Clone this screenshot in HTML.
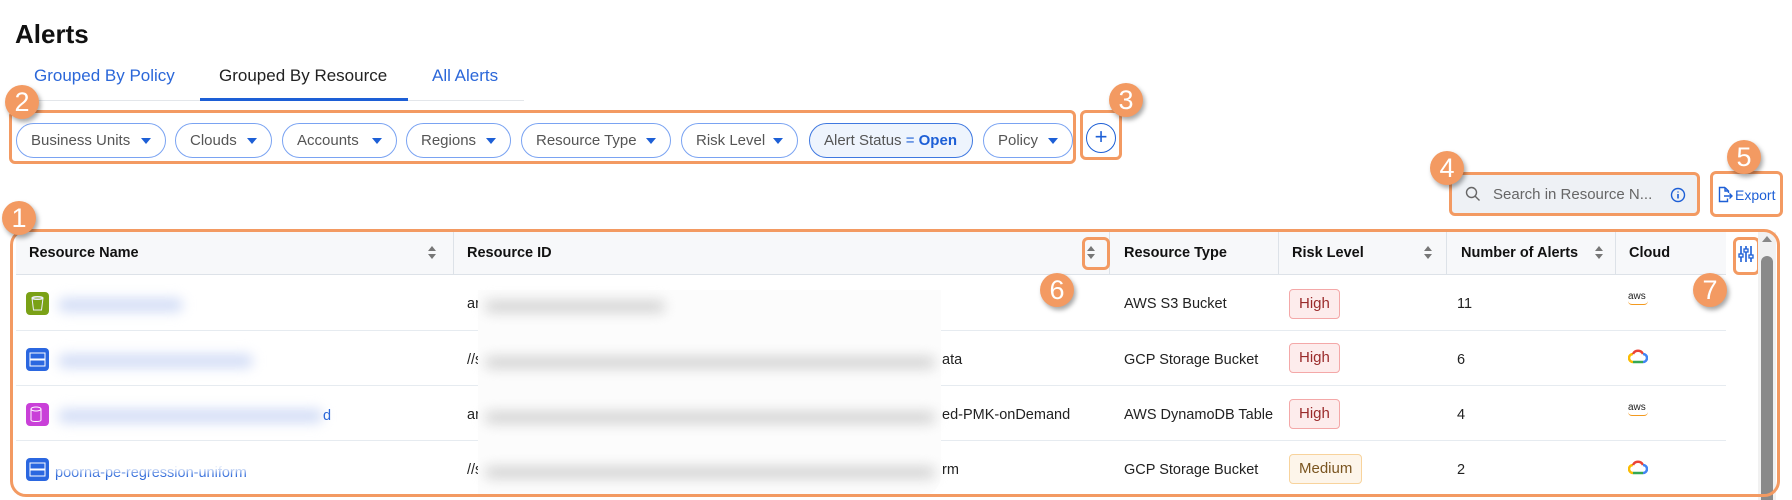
<!DOCTYPE html>
<html><head><meta charset="utf-8"><style>
*{box-sizing:border-box;margin:0;padding:0}
body{width:1792px;height:500px;background:#fff;font-family:"Liberation Sans",sans-serif;position:relative;overflow:hidden;color:#222}
.a{position:absolute}
.chip{position:absolute;top:123px;height:35px;border:1.5px solid #7aa3f2;border-radius:18px;font-size:15px;color:#555;display:flex;align-items:center;padding-left:14px}
.chip i{position:absolute;right:14px;top:14px;width:0;height:0;border-left:5px solid transparent;border-right:5px solid transparent;border-top:6px solid #1d5fd6}
.badge{position:absolute;width:34px;height:34px;border-radius:50%;background:#f39a62;color:#fff;font-size:27px;text-align:center;line-height:34px;box-shadow:2px 3px 5px rgba(0,0,0,.35);z-index:5}
.ob{position:absolute;border:3px solid #f39a62;border-radius:6px}
.th{position:absolute;top:232px;height:43px;font-size:14.5px;font-weight:bold;line-height:43px;color:#111}
.sort{position:absolute;width:8px;height:14px}
.sort:before{content:"";position:absolute;left:0;top:0;border-left:4.5px solid transparent;border-right:4.5px solid transparent;border-bottom:5px solid #777}
.sort:after{content:"";position:absolute;left:0;top:8px;border-left:4.5px solid transparent;border-right:4.5px solid transparent;border-top:5px solid #777}
.row{position:absolute;left:16px;width:1710px;border-bottom:1px solid #e6ebf0}
.t{position:absolute;font-size:14.5px;color:#222}
.pill{position:absolute;left:1289px;height:30px;border-radius:4px;font-size:15px;line-height:28px;padding:0 9px}
.hi{background:#fdecec;border:1px solid #f4a8a8;color:#9a2a2a}
.md{background:#fdf5ea;border:1px solid #f8d39c;color:#7a5520}
.blr{position:absolute;filter:blur(6px);background:#d3ddf6;height:14px;border-radius:7px}
.blg{position:absolute;filter:blur(6px);background:#d6d6d6;height:13px;border-radius:6px}
.ic{position:absolute;left:26px;width:23px;height:23px;border-radius:4px}
</style></head><body>
<div class="a" style="left:15px;top:19px;font-size:26px;font-weight:bold;color:#111">Alerts</div>
<div class="a" style="left:34px;top:66px;font-size:17px;color:#2b67d9">Grouped By Policy</div>
<div class="a" style="left:219px;top:66px;font-size:17px;color:#222">Grouped By Resource</div>
<div class="a" style="left:432px;top:66px;font-size:17px;color:#2b67d9">All Alerts</div>
<div class="a" style="left:34px;top:100px;width:490px;height:1px;background:#e3e6ea"></div>
<div class="a" style="left:200px;top:98px;width:208px;height:3px;background:#1d5fd6"></div>

<div class="ob" style="left:9px;top:110px;width:1067px;height:54px"></div>
<div class="chip" style="left:16px;width:150px">Business Units<i></i></div>
<div class="chip" style="left:175px;width:97px">Clouds<i></i></div>
<div class="chip" style="left:282px;width:115px">Accounts<i></i></div>
<div class="chip" style="left:406px;width:105px">Regions<i></i></div>
<div class="chip" style="left:521px;width:150px">Resource Type<i></i></div>
<div class="chip" style="left:681px;width:117px">Risk Level<i></i></div>
<div class="chip" style="left:809px;width:164px;background:#eef4fd;border-color:#3f78e0">Alert Status&nbsp;<span style="color:#1d5fd6">= <b>Open</b></span></div>
<div class="chip" style="left:983px;width:90px">Policy<i></i></div>
<div class="ob" style="left:1080px;top:110px;width:42px;height:50px"></div>
<div class="a" style="left:1086px;top:123px;width:30px;height:30px;border:1.5px solid #1d5fd6;border-radius:50%;color:#1d5fd6;font-size:22px;line-height:26px;text-align:center">+</div>

<div class="ob" style="left:1449px;top:172px;width:251px;height:44px;background:#eef1f5"></div>
<svg class="a" style="left:1465px;top:186px" width="16" height="16" viewBox="0 0 16 16"><circle cx="6.5" cy="6.5" r="5" fill="none" stroke="#666" stroke-width="1.4"/><path d="M10.2 10.2L14.5 14.5" stroke="#666" stroke-width="1.4"/></svg>
<div class="a" style="left:1493px;top:186px;font-size:15px;color:#666">Search in Resource N...</div>
<svg class="a" style="left:1670px;top:187px" width="16" height="16" viewBox="0 0 16 16"><circle cx="8" cy="8" r="6.5" fill="none" stroke="#1d5fd6" stroke-width="1.4"/><path d="M8 7v4.5M8 4.5v1" stroke="#1d5fd6" stroke-width="1.6"/></svg>
<div class="ob" style="left:1710px;top:171px;width:73px;height:46px"></div>
<svg class="a" style="left:1716px;top:186px" width="17" height="17" viewBox="0 0 17 17"><path d="M9 1.5H3.5v14h8v-3M9 1.5l3.5 3.5v2M9 1.5v3.5h3.5" fill="none" stroke="#1d5fd6" stroke-width="1.4"/><path d="M8 10h8M13.5 7.5L16 10l-2.5 2.5" fill="none" stroke="#1d5fd6" stroke-width="1.4"/></svg>
<div class="a" style="left:1735px;top:187px;font-size:14px;color:#1d5fd6">Export</div>

<!-- table -->
<div class="a" style="left:16px;top:232px;width:1710px;height:43px;background:#f7f8fa;border-bottom:1px solid #dde2e8"></div>
<div class="a" style="left:453px;top:232px;width:1px;height:43px;background:#dde2e8"></div>
<div class="a" style="left:1109px;top:232px;width:1px;height:43px;background:#dde2e8"></div>
<div class="a" style="left:1278px;top:232px;width:1px;height:43px;background:#dde2e8"></div>
<div class="a" style="left:1446px;top:232px;width:1px;height:43px;background:#dde2e8"></div>
<div class="a" style="left:1615px;top:232px;width:1px;height:43px;background:#dde2e8"></div>
<div class="th" style="left:29px">Resource Name</div>
<div class="th" style="left:467px">Resource ID</div>
<div class="th" style="left:1124px">Resource Type</div>
<div class="th" style="left:1292px">Risk Level</div>
<div class="th" style="left:1461px">Number of Alerts</div>
<div class="th" style="left:1629px">Cloud</div>
<div class="sort" style="left:428px;top:246px"></div>
<div class="sort" style="left:1087px;top:246px"></div>
<div class="sort" style="left:1424px;top:246px"></div>
<div class="sort" style="left:1595px;top:246px"></div>
<div class="ob" style="left:1082px;top:237px;width:28px;height:33px"></div>
<div class="ob" style="left:1733px;top:237px;width:27px;height:38px"></div>
<svg class="a" style="left:1738px;top:245px" width="16" height="18" viewBox="0 0 16 18"><path d="M3 1v16M8 1v16M13 1v16" stroke="#1d5fd6" stroke-width="1.6"/><rect x="1" y="9" width="4" height="3" fill="#fff" stroke="#1d5fd6" stroke-width="1.3"/><rect x="6" y="4" width="4" height="3" fill="#fff" stroke="#1d5fd6" stroke-width="1.3"/><rect x="11" y="10" width="4" height="3" fill="#fff" stroke="#1d5fd6" stroke-width="1.3"/></svg>

<div class="row" style="top:275px;height:56px"></div>
<div class="row" style="top:331px;height:55px"></div>
<div class="row" style="top:386px;height:55px"></div>

<div class="ic" style="top:292px;background:#7aa116"><svg width="23" height="23"><path d="M6 6h11l-1.5 12h-8z" fill="none" stroke="#eef" stroke-width="1"/><ellipse cx="11.5" cy="6" rx="5.5" ry="1.5" fill="none" stroke="#eef"/></svg></div>
<div class="ic" style="top:348px;background:#2b67e0"><svg width="23" height="23"><rect x="4" y="5" width="15" height="6" fill="none" stroke="#fff"/><rect x="4" y="12" width="15" height="6" fill="none" stroke="#fff"/></svg></div>
<div class="ic" style="top:403px;background:#c940d8"><svg width="23" height="23"><ellipse cx="10" cy="6" rx="5" ry="2" fill="none" stroke="#fff"/><path d="M5 6v11c0 2 10 2 10 0V6" fill="none" stroke="#fff"/></svg></div>
<div class="ic" style="top:458px;background:#2b67e0"><svg width="23" height="23"><rect x="4" y="5" width="15" height="6" fill="none" stroke="#fff"/><rect x="4" y="12" width="15" height="6" fill="none" stroke="#fff"/></svg></div>

<div class="blr" style="left:58px;top:298px;width:125px"></div>
<div class="blr" style="left:58px;top:354px;width:195px"></div>
<div class="blr" style="left:58px;top:409px;width:265px"></div>
<div class="t" style="left:323px;top:408px;color:#2b67d9">d</div>
<div class="t" style="left:55px;top:465px;color:#2b67d9">poorna-pe-regression-uniform</div>
<div class="a" style="left:55px;top:460px;width:205px;height:12px;background:rgba(255,255,255,.9);filter:blur(3px)"></div>

<div class="t" style="left:467px;top:296px">ar</div>
<div class="t" style="left:467px;top:352px">//s</div>
<div class="t" style="left:467px;top:407px">ar</div>
<div class="t" style="left:467px;top:462px">//s</div>
<div class="a" style="left:478px;top:290px;width:463px;height:206px;background:#fcfcfc;border-radius:0 0 20px 0"></div>
<div class="blg" style="left:485px;top:300px;width:180px"></div>
<div class="blg" style="left:485px;top:356px;width:450px"></div>
<div class="blg" style="left:485px;top:411px;width:450px"></div>
<div class="blg" style="left:485px;top:466px;width:450px"></div>
<div class="t" style="left:942px;top:352px">ata</div>
<div class="t" style="left:942px;top:407px">ed-PMK-onDemand</div>
<div class="t" style="left:942px;top:462px">rm</div>

<div class="t" style="left:1124px;top:296px">AWS S3 Bucket</div>
<div class="t" style="left:1124px;top:352px">GCP Storage Bucket</div>
<div class="t" style="left:1124px;top:407px">AWS DynamoDB Table</div>
<div class="t" style="left:1124px;top:462px">GCP Storage Bucket</div>

<div class="pill hi" style="top:289px">High</div>
<div class="pill hi" style="top:343px">High</div>
<div class="pill hi" style="top:399px">High</div>
<div class="pill md" style="top:454px">Medium</div>

<div class="t" style="left:1457px;top:296px">11</div>
<div class="t" style="left:1457px;top:352px">6</div>
<div class="t" style="left:1457px;top:407px">4</div>
<div class="t" style="left:1457px;top:462px">2</div>

<div class="a" style="left:1628px;top:292px;font-size:10px;color:#222;line-height:9px">aws<div style="width:20px;height:4px;border-bottom:1.5px solid #f39a1f;border-radius:0 0 10px 10px"></div></div>
<div class="a" style="left:1628px;top:403px;font-size:10px;color:#222;line-height:9px">aws<div style="width:20px;height:4px;border-bottom:1.5px solid #f39a1f;border-radius:0 0 10px 10px"></div></div>
<svg class="a" style="left:1628px;top:348px" width="20" height="16" viewBox="0 0 20 16"><path d="M5 14a4 4 0 0 1 0-8" fill="none" stroke="#fbbc04" stroke-width="2.5"/><path d="M5 6a5.5 5.5 0 0 1 10 0" fill="none" stroke="#ea4335" stroke-width="2.5"/><path d="M15 6a4 4 0 0 1 0 8" fill="none" stroke="#4285f4" stroke-width="2.5"/><path d="M5 14h10" stroke="#34a853" stroke-width="2.5"/></svg>
<svg class="a" style="left:1628px;top:459px" width="20" height="16" viewBox="0 0 20 16"><path d="M5 14a4 4 0 0 1 0-8" fill="none" stroke="#fbbc04" stroke-width="2.5"/><path d="M5 6a5.5 5.5 0 0 1 10 0" fill="none" stroke="#ea4335" stroke-width="2.5"/><path d="M15 6a4 4 0 0 1 0 8" fill="none" stroke="#4285f4" stroke-width="2.5"/><path d="M5 14h10" stroke="#34a853" stroke-width="2.5"/></svg>

<!-- scrollbar -->
<div class="a" style="left:1758px;top:232px;width:18px;height:268px;background:#f1f1f1"></div>
<div class="a" style="left:1762px;top:236px;border-left:5px solid transparent;border-right:5px solid transparent;border-bottom:6px solid #888"></div>
<div class="a" style="left:1761px;top:256px;width:12px;height:244px;background:#8a8a8a;border-radius:6px 6px 0 0"></div>

<div class="ob" style="left:10px;top:229px;width:1770px;height:268px;border-radius:16px"></div>

<div class="badge" style="left:5px;top:85px">2</div>
<div class="badge" style="left:1109px;top:83px">3</div>
<div class="badge" style="left:1430px;top:151px">4</div>
<div class="badge" style="left:1727px;top:140px">5</div>
<div class="badge" style="left:2px;top:201px">1</div>
<div class="badge" style="left:1040px;top:273px">6</div>
<div class="badge" style="left:1693px;top:273px">7</div>
</body></html>
